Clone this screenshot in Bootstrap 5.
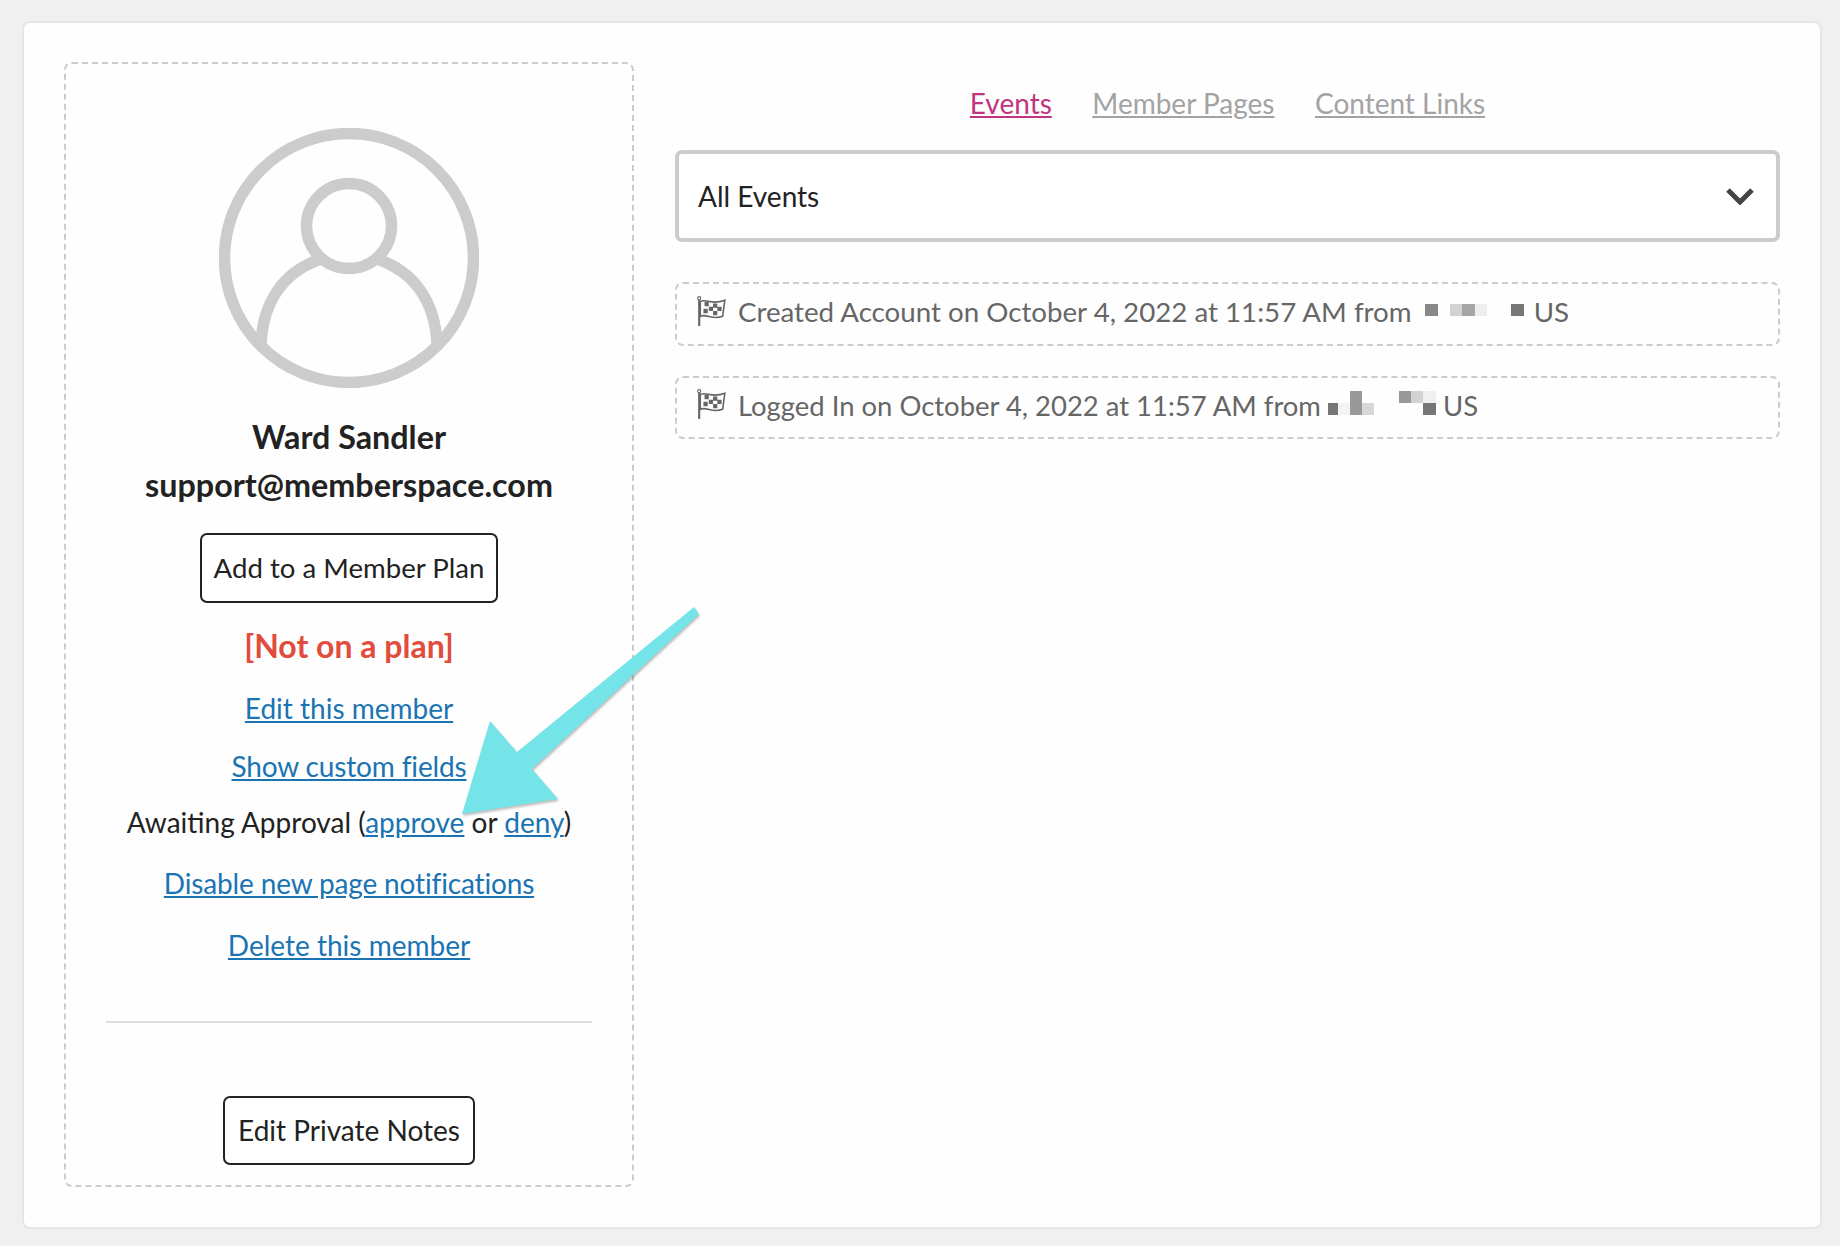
<!DOCTYPE html>
<html lang="en">
<head>
<meta charset="utf-8">
<title>Member</title>
<link href="https://cdn.jsdelivr.net/npm/bootstrap@5.3.0/dist/css/bootstrap.min.css" rel="stylesheet">
<style>
html,body{height:100%;}
body{background:#f0f0f1;font-family:Lato,"Liberation Sans",sans-serif;font-size:28px;color:#222;overflow:hidden;font-variant-ligatures:common-ligatures;text-rendering:optimizeLegibility;}
.shell{margin:21px 18px 0 22px;height:1208px;border:2px solid #e6e6e6;border-radius:8px;background:#fefefe;padding:39px 40px 40px 40px;gap:41px;}
.side{width:570px;height:1125px;flex:none;border:2px dashed #ccc;border-radius:8px;padding:64px 40px 20px;}
.avatar{width:260px;height:260px;display:block;margin-bottom:25px;}
.who{font-weight:700;line-height:48px;font-size:32.3px;}
.act{font-size:28px;height:69.5px;padding:0 13px;border:2px solid #222;border-radius:7px;color:#222;background:#fff;line-height:1;}
.act-plan{font-size:27.6px;padding:0 12px;}
.noplan{color:#e24c3c;font-weight:700;font-size:32px;line-height:40px;margin-top:23px;}
.side a.lnk,.side a.lnk:hover{color:#1a74b4;}
.line{line-height:40px;}
.tight{letter-spacing:-.15px;}
.sp-edit{margin-top:22px;}
.sp-show{margin-top:18px;}
.sp-wait{margin-top:16px;}
.sp-wide{margin-top:21px;}
.sp-last{margin-top:22px;}
.divider{width:100%;border:0;height:2px;background:#ddd;opacity:1;margin:56px 0 0;}
.main{min-width:0;}
.tabs{gap:40.500px;height:64px;margin:9px 0 15px;}
.tabs a{color:#a3a3a3;font-size:28px;line-height:36px;}
.tabs a.on{color:#c0367e;}
.pick{height:92px;border:4px solid #ccc;border-radius:7px;font-size:28px;color:#222;padding:0 0 0 19px;margin-bottom:40px;font-family:inherit;
 background-image:url("data:image/svg+xml,%3csvg xmlns='http://www.w3.org/2000/svg' viewBox='0 0 28 18'%3e%3cpath fill='none' stroke='%23444' stroke-width='5' d='M2 3l12 12L26 3'/%3e%3c/svg%3e");
 background-size:28px 18px;background-position:right 22px center;}
.ev{height:63.5px;border:2px dashed #ccc;border-radius:8px;color:#666;font-size:27.7px;padding:0 20px 4px;gap:10px;margin-bottom:30px;}
.ev-login{font-size:27.45px;}
.flag{width:32px;height:32px;flex:none;margin-top:-2px;margin-left:-1px;}
.blot{height:30px;vertical-align:-5px;}
.arrow{left:416px;top:567px;width:280px;height:250px;filter:drop-shadow(1px 2px 1px rgba(0,0,0,.25));pointer-events:none;}
</style>
</head>
<body>
<div class="shell d-flex position-relative">
  <div class="side d-flex flex-column align-items-center text-center">
    <svg class="avatar" viewBox="0 0 260 260" fill="none" stroke="#ccc" stroke-width="11.5" aria-hidden="true">
      <circle cx="130" cy="130" r="124.5"/>
      <circle cx="130" cy="98" r="42.5"/>
      <path d="M42 216C44 172 66 143 102 131M158 131C194 143 216 172 218 216"/>
    </svg>
    <div class="who">Ward Sandler</div>
    <div class="who">support@memberspace.com</div>
    <button type="button" class="btn act act-plan mt-4">Add to a Member Plan</button>
    <div class="noplan">[Not on a plan]</div>
    <div class="line sp-edit"><a class="lnk" href="#">Edit this member</a></div>
    <div class="line sp-show"><a class="lnk tight" href="#">Show custom fields</a></div>
    <div class="line sp-wait">Awaiting Approval (<a class="lnk" href="#">approve</a> or <a class="lnk" href="#">deny</a>)</div>
    <div class="line sp-wide"><a class="lnk tight" href="#">Disable new page notifications</a></div>
    <div class="line sp-last"><a class="lnk" href="#">Delete this member</a></div>
    <hr class="divider">
    <button type="button" class="btn act mt-auto">Edit Private Notes</button>
  </div>
  <div class="main flex-grow-1">
    <div class="tabs d-flex justify-content-center align-items-center">
      <a class="on" href="#">Events</a>
      <a href="#">Member Pages</a>
      <a href="#">Content Links</a>
    </div>
    <select class="form-select pick shadow-none" aria-label="Filter events"><option>All Events</option></select>
    <div class="ev d-flex align-items-center">
      <svg class="flag" viewBox="0 0 30 30" aria-hidden="true"><defs><g id="chk"><path d="M3 3V29" stroke="#666" stroke-width="2" fill="none"/><circle cx="3" cy="3" r="1.500" fill="#fff" stroke="#666"/><path d="M4 6C10 3 14 10 27 5L25 20C15 24 10 17 4 20Z" fill="#fff" stroke="#666" stroke-width="1.500"/><path d="M8 6.500h4v4H8zM16 8h4v4h-4zM12 11h4v4h-4zM20 11h4v4h-4zM7 13h4v4H7zM16 15h4v4h-4z" fill="#666"/></g></defs><use href="#chk"/></svg>
      <span>Created Account on October 4, 2022 at 11:57 AM from <svg class="blot" width="108" height="30" viewBox="0 0 108 30" aria-hidden="true"><rect x="6" y="7" width="13" height="12" fill="#888"/><rect x="31" y="7" width="12" height="12" fill="#d2d2d2"/><rect x="43" y="7" width="13" height="12" fill="#a5a5a5"/><rect x="56" y="7" width="12" height="12" fill="#eee"/><rect x="92" y="7" width="13" height="12" fill="#777"/></svg> US</span>
    </div>
    <div class="ev ev-login d-flex align-items-center">
      <svg class="flag" viewBox="0 0 30 30" aria-hidden="true"><use href="#chk"/></svg>
      <span>Logged In on October 4, 2022 at 11:57 AM from <svg class="blot" width="108" height="30" viewBox="0 0 108 30" aria-hidden="true"><rect x="10" y="12" width="12" height="12" fill="#f4f4f4"/><rect x="0" y="12" width="10" height="12" fill="#777"/><rect x="22" y="0" width="12" height="24" fill="#999"/><rect x="34" y="12" width="12" height="12" fill="#d8d8d8"/><rect x="95" y="0" width="13" height="12" fill="#f0f0f0"/><rect x="71" y="0" width="12" height="12" fill="#999"/><rect x="83" y="0" width="12" height="12" fill="#d2d2d2"/><rect x="95" y="12" width="13" height="12" fill="#777"/></svg> US</span>
    </div>
  </div>
  <svg class="arrow position-absolute" viewBox="0 0 280 250" aria-hidden="true"><path d="M254 17L259 24L92 179L118 209L22 224L50 131L77 162Z" fill="#75e4e9"/></svg>
</div>
<script src="https://cdn.jsdelivr.net/npm/bootstrap@5.3.0/dist/js/bootstrap.bundle.min.js"></script>
</body>
</html>
